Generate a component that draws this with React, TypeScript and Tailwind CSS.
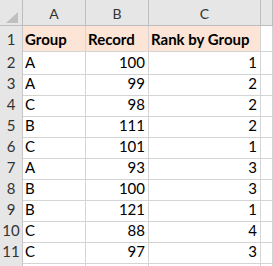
const rows: [string, number, number][] = [
  ['A', 100, 1],
  ['A', 99, 2],
  ['C', 98, 2],
  ['B', 111, 2],
  ['C', 101, 1],
  ['A', 93, 3],
  ['B', 100, 3],
  ['B', 121, 1],
  ['C', 88, 4],
  ['C', 97, 3],
];

const cols = 'grid grid-cols-[23px_63px_63px_112px_1fr]';
const cell = 'flex items-center border-r border-b border-[#d4d4d4] pt-[2px] text-[15px] text-black';
const rowHead =
  'flex items-center justify-center border-r border-b border-[#c8c8c8] bg-[#e6e6e6] pt-[2px] text-[15px] text-[#333]';

export default function App() {
  return (
    <div className="h-[266px] w-[273px] overflow-hidden bg-white font-['Lato',sans-serif]">
      {/* column letters */}
      <div className={`${cols} h-[26px]`}>
        <div className="relative border-r border-b border-[#bdbdbd] bg-[#e6e6e6]">
          <svg className="absolute bottom-[2px] right-[4px]" width="12" height="11" viewBox="0 0 12 11">
            <polygon points="12,0 12,11 0,11" fill="#bfbfbf" />
          </svg>
        </div>
        {['A', 'B', 'C', ''].map((c, i) => (
          <div
            key={i}
            className="flex items-center justify-center border-r border-b border-[#bdbdbd] bg-[#e6e6e6] pt-[1px] text-[14px] text-[#333]"
          >
            {c}
          </div>
        ))}
      </div>

      {/* header row */}
      <div className={`${cols} h-[23px]`}>
        <div className={rowHead}>1</div>
        <div className={`${cell} bg-[#fce4d6] pl-[2px] text-[15.5px] font-bold`}>Group</div>
        <div className={`${cell} bg-[#fce4d6] pl-[2px] text-[15.5px] font-bold`}>Record</div>
        <div className={`${cell} bg-[#fce4d6] pl-[2px] text-[15.5px] font-bold`}>Rank by Group</div>
        <div className={cell} />
      </div>

      {rows.map(([g, rec, rank], i) => (
        <div key={i} className={`${cols} h-[21px]`}>
          <div className={rowHead}>{i + 2}</div>
          <div className={`${cell} pl-[2px]`}>{g}</div>
          <div className={`${cell} justify-end pr-[3px]`}>{rec}</div>
          <div className={`${cell} justify-end pr-[3px]`}>{rank}</div>
          <div className={cell} />
        </div>
      ))}

      <div className={`${cols} h-[21px]`}>
        <div className={rowHead} />
        <div className={cell} />
        <div className={cell} />
        <div className={cell} />
        <div className={cell} />
      </div>
    </div>
  );
}
